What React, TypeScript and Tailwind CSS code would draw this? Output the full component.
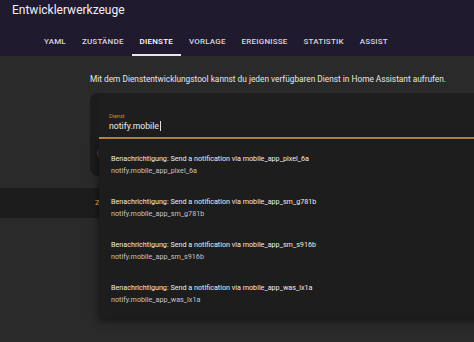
import React from 'react';

const tabs = ['YAML', 'ZUSTÄNDE', 'DIENSTE', 'VORLAGE', 'EREIGNISSE', 'STATISTIK', 'ASSIST'];

const services = [
  'pixel_6a',
  'sm_g781b',
  'sm_s916b',
  'was_lx1a',
];

export default function App() {
  return (
    <div className="relative w-[474px] h-[342px] overflow-hidden bg-[#2a2a2b] font-['Roboto',sans-serif] text-white">
      <header className="h-[56px] bg-[#1f1a2e]">
        <div className="h-[28px] pl-[12px] text-[12px] leading-[21px] text-[#f2f0f5]">Entwicklerwerkzeuge</div>
        <nav className="flex h-[28px] pl-[36px]">
          {tabs.map((t) => (
            <div
              key={t}
              className={
                t === 'DIENSTE'
                  ? 'relative flex items-center px-[8px] text-[8px] font-medium tracking-[0.2px] text-white'
                  : 'relative flex items-center px-[8px] text-[8px] font-medium tracking-[0.2px] text-[#d9d5e0]'
              }
            >
              {t}
              {t === 'DIENSTE' && (
                <span className="absolute left-0 right-0 bottom-0 h-[2px] bg-[#e8e6ec]" />
              )}
            </div>
          ))}
        </nav>
      </header>

      <main className="pt-[16px]">
        <p className="pl-[90px] text-[8.3px] leading-[14px] text-[#e6e6e6]">
          Mit dem Dienstentwicklungstool kannst du jeden verfügbaren Dienst in Home Assistant aufrufen.
        </p>

        <section className="ml-[90px] mt-[7px] h-[83px] w-[400px] rounded-[8px] bg-[#1c1c1c] pl-[9px]">
          <div className="pt-[19px] h-[46px] border-b-2 border-[#c38f3d] bg-[#1e1e1e] pl-[10px]">
            <div className="text-[5.5px] leading-[8px] text-[#c98a3c]">Dienst</div>
            <div className="flex items-center text-[8.7px] leading-[12px] text-[#ececec]">
              notify.mobile
              <span className="ml-[1px] h-[10px] w-[1px] bg-[#e0e0e0]" />
            </div>
          </div>
          <div className="mt-[8px] -ml-[2px] flex h-[12px] w-[12px] items-center justify-center rounded-full border border-[#4a4a4a] text-[7px] text-[#777]">
            ?
          </div>
        </section>

        <div className="mt-[12px] flex h-[30px] items-center bg-[#1c1c1c] pl-[95px] text-[8px] font-bold text-[#d4923a]">
          Z
        </div>
      </main>

      <div className="absolute left-[99px] top-[140px] h-[178px] w-[390px] bg-[#1d1d1d] py-[3.5px] shadow-[0_2px_8px_rgba(0,0,0,0.6)]">
        {services.map((s) => (
          <div key={s} className="flex h-[43px] flex-col justify-center pl-[12px] text-[7.2px] leading-[12px]">
            <div className="text-[#ececec]">Benachrichtigung: Send a notification via mobile_app_{s}</div>
            <div className="text-[#c4c4c4]">notify.mobile_app_{s}</div>
          </div>
        ))}
      </div>
    </div>
  );
}
